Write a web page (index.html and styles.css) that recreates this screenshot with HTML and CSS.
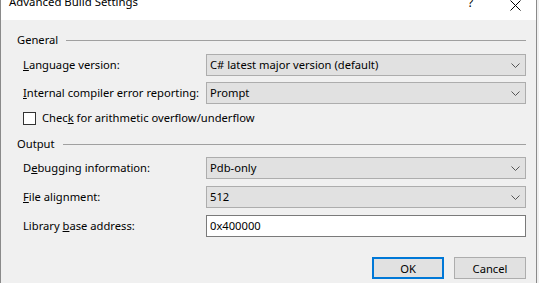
FILE: index.html
```html
<!DOCTYPE html>
<html lang="en">
<head>
  <meta charset="UTF-8" />
  <title>Advanced Build Settings</title>
  <link rel="stylesheet" href="styles.css">
</head>
<body>
  <div class="window">
    <div class="titlebar">
      <span class="title">Advanced Build Settings</span>
      <span class="help">?</span>
      <svg class="close" width="11" height="11" viewBox="0 0 11 11">
        <path d="M0.5 0.5 L10.5 10.5 M10.5 0.5 L0.5 10.5" stroke="#000" stroke-width="1" fill="none" />
      </svg>
    </div>

    <div class="content">
      <div class="group-head">
        <span>General</span>
        <div class="rule"></div>
      </div>

      <div class="row first">
        <label><u>L</u>anguage version:</label>
        <div class="combo">
          <span>C# latest major version (default)</span>
          <svg class="chev" width="9" height="5" viewBox="0 0 9 5"><path d="M0.5 0.5 L4.5 4.5 L8.5 0.5" stroke="#555" fill="none" /></svg>
        </div>
      </div>

      <div class="row">
        <label><u>I</u>nternal compiler error reporting:</label>
        <div class="combo">
          <span>Prompt</span>
          <svg class="chev" width="9" height="5" viewBox="0 0 9 5"><path d="M0.5 0.5 L4.5 4.5 L8.5 0.5" stroke="#555" fill="none" /></svg>
        </div>
      </div>

      <div class="check-row">
        <div class="checkbox"></div>
        <span>Chec<u>k</u> for arithmetic overflow/underflow</span>
      </div>

      <div class="group-head output">
        <span>Output</span>
        <div class="rule"></div>
      </div>

      <div class="out-rows">
        <div class="row first">
          <label>D<u>e</u>bugging information:</label>
          <div class="combo">
            <span>Pdb-only</span>
            <svg class="chev" width="9" height="5" viewBox="0 0 9 5"><path d="M0.5 0.5 L4.5 4.5 L8.5 0.5" stroke="#555" fill="none" /></svg>
          </div>
        </div>

        <div class="row">
          <label><u>F</u>ile alignment:</label>
          <div class="combo">
            <span>512</span>
            <svg class="chev" width="9" height="5" viewBox="0 0 9 5"><path d="M0.5 0.5 L4.5 4.5 L8.5 0.5" stroke="#555" fill="none" /></svg>
          </div>
        </div>

        <div class="row">
          <label>Library <u>b</u>ase address:</label>
          <div class="textbox">0x400000</div>
        </div>
      </div>

      <div class="buttons">
        <button class="btn default">OK</button>
        <button class="btn">Cancel</button>
      </div>
    </div>
  </div>
</body>
</html>
```

FILE: styles.css
```css
body {
  margin: 0;
  background: #f0f0f0;
  font-family: "Noto Sans", "Open Sans", sans-serif;
  font-size: 11.2px;
  line-height: 16px;
  color: #000;
}

.window {
  width: 535px;
  height: 283px;
  border-left: 1px solid #8a8a8a;
  border-right: 1px solid #8a8a8a;
  background: #f0f0f0;
  overflow: hidden;
}

.titlebar {
  height: 20px;
  background: #fff;
  position: relative;
}
.titlebar .title {
  position: absolute;
  left: 8px;
  top: -6px;
  font-size: 11.4px;
}
.titlebar .help {
  position: absolute;
  left: 467px;
  top: -5px;
  font-size: 12px;
}
.titlebar .close {
  position: absolute;
  left: 509px;
  top: 0;
}

.content {
  padding: 10px 10px 0 16px;
}

.group-head {
  display: flex;
  align-items: center;
  height: 20px;
}
.group-head.output { margin-top: 6px; }
.group-head .rule {
  flex: 1;
  height: 0;
  border-top: 1px solid #a0a0a0;
  margin-left: 8px;
}

.row {
  display: flex;
  align-items: center;
  margin-top: 6px;
  padding-left: 6px;
  white-space: nowrap;
}
.row.first { margin-top: 4px; }
.out-rows .row { margin-top: 7px; }
.out-rows .row.first { margin-top: 3px; }
.row label {
  width: 183px;
  flex: none;
}

.combo {
  width: 317px;
  height: 20px;
  background: #e1e1e1;
  border: 1px solid #adadad;
  display: flex;
  align-items: center;
  justify-content: space-between;
  padding-left: 3px;
}
.combo span { flex: 1; }
.combo .chev { margin-right: 5px; }

.textbox {
  width: 317px;
  height: 20px;
  line-height: 20px;
  background: #fff;
  border: 1px solid #7a7a7a;
  padding-left: 3px;
}

.check-row {
  display: flex;
  align-items: center;
  height: 20px;
  margin-top: 4px;
  padding-left: 6px;
  white-space: nowrap;
}
.checkbox {
  width: 11px;
  height: 11px;
  border: 1px solid #333;
  background: #fff;
  margin-right: 6px;
}

.buttons {
  display: flex;
  justify-content: flex-end;
  gap: 10px;
  margin-top: 20px;
}
.btn {
  width: 72px;
  height: 22px;
  font-family: inherit;
  font-size: 11.2px;
  background: #e1e1e1;
  border: 1px solid #adadad;
  padding: 0;
  color: #000;
}
.btn.default {
  border: 2px solid #0078d7;
}
```
